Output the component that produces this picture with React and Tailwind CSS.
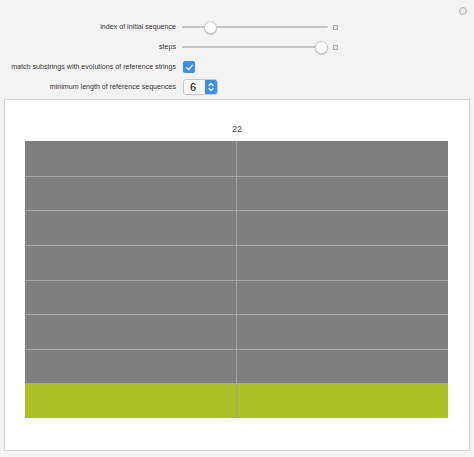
import React from "react";

function Slider({ pos }) {
  return (
    <div className="flex items-center">
      <div className="relative w-[146px] h-[12px] flex items-center">
        <div className="w-full h-[2px] bg-[#c4c4c4] rounded-full" />
        <div
          className="absolute top-0 w-[13px] h-[13px] rounded-full bg-white border border-[#c8c8c8] shadow-[0_1px_1px_rgba(0,0,0,0.2)]"
          style={{ left: pos - 6.5 }}
        />
      </div>
      <div className="ml-[5px] w-[5px] h-[5px] border border-[#b0b0b0] bg-[#e8e8e8]" />
    </div>
  );
}

export default function App() {
  const rows = Array.from({ length: 8 });
  return (
    <div className="w-[474px] h-[457px] bg-[#f3f3f3] relative" style={{ fontFamily: '"Liberation Sans", Arial, sans-serif' }}>
      <div className="absolute left-[459px] top-[7px] w-[8px] h-[8px] rounded-full border border-[#b4b4b4] bg-[#e6e6e6]" />
      <div className="pt-[17px] flex flex-col text-[7.1px] text-[#333]">
        <div className="h-[20px] flex items-center">
          <div className="w-[178px] text-right pr-[2px]">index of initial sequence</div>
          <div className="ml-[4px]"><Slider pos={28} /></div>
        </div>
        <div className="h-[20px] flex items-center">
          <div className="w-[178px] text-right pr-[2px]">steps</div>
          <div className="ml-[4px]"><Slider pos={139} /></div>
        </div>
        <div className="h-[20px] flex items-center">
          <div className="w-[178px] text-right pr-[2px]">match substrings with evolutions of reference strings</div>
          <div className="ml-[5px] w-[12px] h-[12px] rounded-[2px] bg-[#3b8ff0] flex items-center justify-center">
            <svg width="9" height="9" viewBox="0 0 10 10"><path d="M2 5.2 L4.2 7.4 L8 2.6" fill="none" stroke="white" strokeWidth="1.6" strokeLinecap="round" strokeLinejoin="round" /></svg>
          </div>
        </div>
        <div className="h-[20px] flex items-center">
          <div className="w-[178px] text-right pr-[2px]">minimum length of reference sequences</div>
          <div className="ml-[5px] flex h-[16px] w-[35px] rounded-[3px] border border-[#c8c8c8] bg-white overflow-hidden">
            <div className="flex-1 flex items-center pl-[6px] text-[11px] text-black">6</div>
            <div className="w-[12px] bg-[#3b8ff0] flex items-center justify-center">
              <svg width="8" height="12" viewBox="0 0 8 12"><path d="M2 4.5 L4 2.5 L6 4.5 M2 7.5 L4 9.5 L6 7.5" fill="none" stroke="white" strokeWidth="1.2" strokeLinecap="round" strokeLinejoin="round" /></svg>
            </div>
          </div>
        </div>
      </div>
      <div className="mt-[2px] ml-[4px] w-[466px] h-[352px] bg-white border border-[#d6d6d6] flex flex-col">
        <div className="h-[41px] flex items-end justify-center pb-[5px] text-[9px] text-[#444]">22</div>
        <div className="ml-[20px] w-[423px] h-[277px] grid grid-rows-8">
          {rows.map((_, i) => (
            <div key={i} className={`grid grid-cols-2 ${i === 7 ? "bg-[#abc027]" : "bg-[#7f7f7f]"} ${i > 0 ? "border-t border-[#a8a8a8]" : ""}`}>
              <div className="border-r border-[#a0a0a0]" />
              <div />
            </div>
          ))}
        </div>
      </div>
    </div>
  );
}
